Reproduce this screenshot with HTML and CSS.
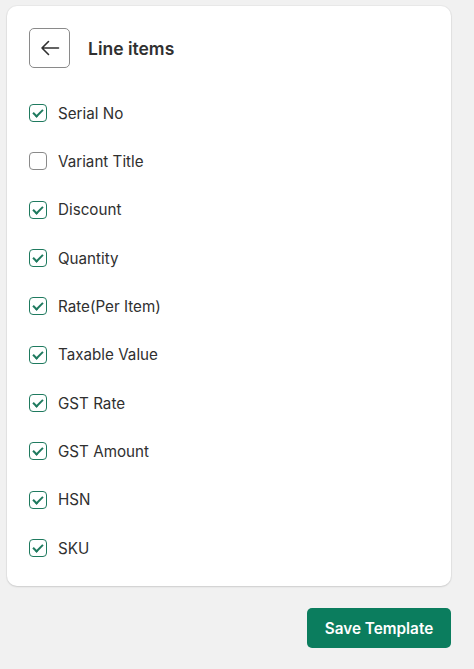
FILE: index.html
```html
<!DOCTYPE html>
<html>
<head>
<meta charset="utf-8">
<link rel="stylesheet" href="styles.css">
</head>
<body>
<div class="page">
  <div class="card">
    <div class="header">
      <button class="back" aria-label="Back">
        <svg width="22" height="22" viewBox="0 0 22 22"><path d="M19.5 11H3M9.5 4.5L3 11l6.5 6.5" fill="none" stroke="#303030" stroke-width="1.6" stroke-linecap="round" stroke-linejoin="round"/></svg>
      </button>
      <h1 class="title">Line items</h1>
    </div>
    <ul class="list">
      <li class="row"><span class="cb on"></span><span class="label">Serial No</span></li>
      <li class="row"><span class="cb"></span><span class="label">Variant Title</span></li>
      <li class="row"><span class="cb on"></span><span class="label">Discount</span></li>
      <li class="row"><span class="cb on"></span><span class="label">Quantity</span></li>
      <li class="row"><span class="cb on"></span><span class="label">Rate(Per Item)</span></li>
      <li class="row"><span class="cb on"></span><span class="label">Taxable Value</span></li>
      <li class="row"><span class="cb on"></span><span class="label">GST Rate</span></li>
      <li class="row"><span class="cb on"></span><span class="label">GST Amount</span></li>
      <li class="row"><span class="cb on"></span><span class="label">HSN</span></li>
      <li class="row"><span class="cb on"></span><span class="label">SKU</span></li>
    </ul>
  </div>
  <div class="actions">
    <button class="save">Save Template</button>
  </div>
</div>
</body>
</html>
```
FILE: styles.css
```css
html, body {
  margin: 0;
  padding: 0;
  background: #f1f1f1;
  font-family: Inter, "Noto Sans", sans-serif;
  color: #303030;
}
.page {
  width: 444px;
  padding: 6px 0 0 7px;
}
.card {
  background: #fff;
  border-radius: 10px;
  box-shadow: 0 1px 2px rgba(0,0,0,0.12), 0 0 0 1px rgba(0,0,0,0.03);
  padding: 22px 22px 14px 22px;
  height: 580px;
  box-sizing: border-box;
}
.header {
  display: flex;
  align-items: center;
  gap: 18px;
  margin-bottom: 21px;
}
.back {
  width: 41px;
  height: 40px;
  border: 1px solid #8a8a8a;
  border-radius: 5px;
  background: #fff;
  display: flex;
  align-items: center;
  justify-content: center;
  padding: 0;
}
.title {
  margin: 0;
  font-size: 17.5px;
  font-weight: 600;
  color: #303030;
}
.list {
  list-style: none;
  margin: 0;
  padding: 0;
}
.row {
  height: 48.33px;
  display: flex;
  align-items: center;
  gap: 11px;
}
.cb {
  width: 18px;
  height: 18px;
  box-sizing: border-box;
  border: 1.5px solid #8a8a8a;
  border-radius: 4px;
  position: relative;
  flex: none;
}
.cb.on {
  border-color: #1f7a5f;
}
.cb.on::after {
  content: "";
  position: absolute;
  left: 5px;
  top: 2px;
  width: 4px;
  height: 8px;
  border-right: 2.2px solid #1f7a5f;
  border-bottom: 2.2px solid #1f7a5f;
  transform: rotate(45deg);
}
.label {
  font-size: 15.2px;
  color: #303030;
}
.actions {
  display: flex;
  justify-content: flex-end;
  margin-top: 22px;
}
.save {
  width: 144px;
  height: 40px;
  background: #0b7d5e;
  color: #fff;
  border: none;
  border-radius: 5px;
  font-family: Inter, "Noto Sans", sans-serif;
  font-size: 15.3px;
  font-weight: 600;
}
```
